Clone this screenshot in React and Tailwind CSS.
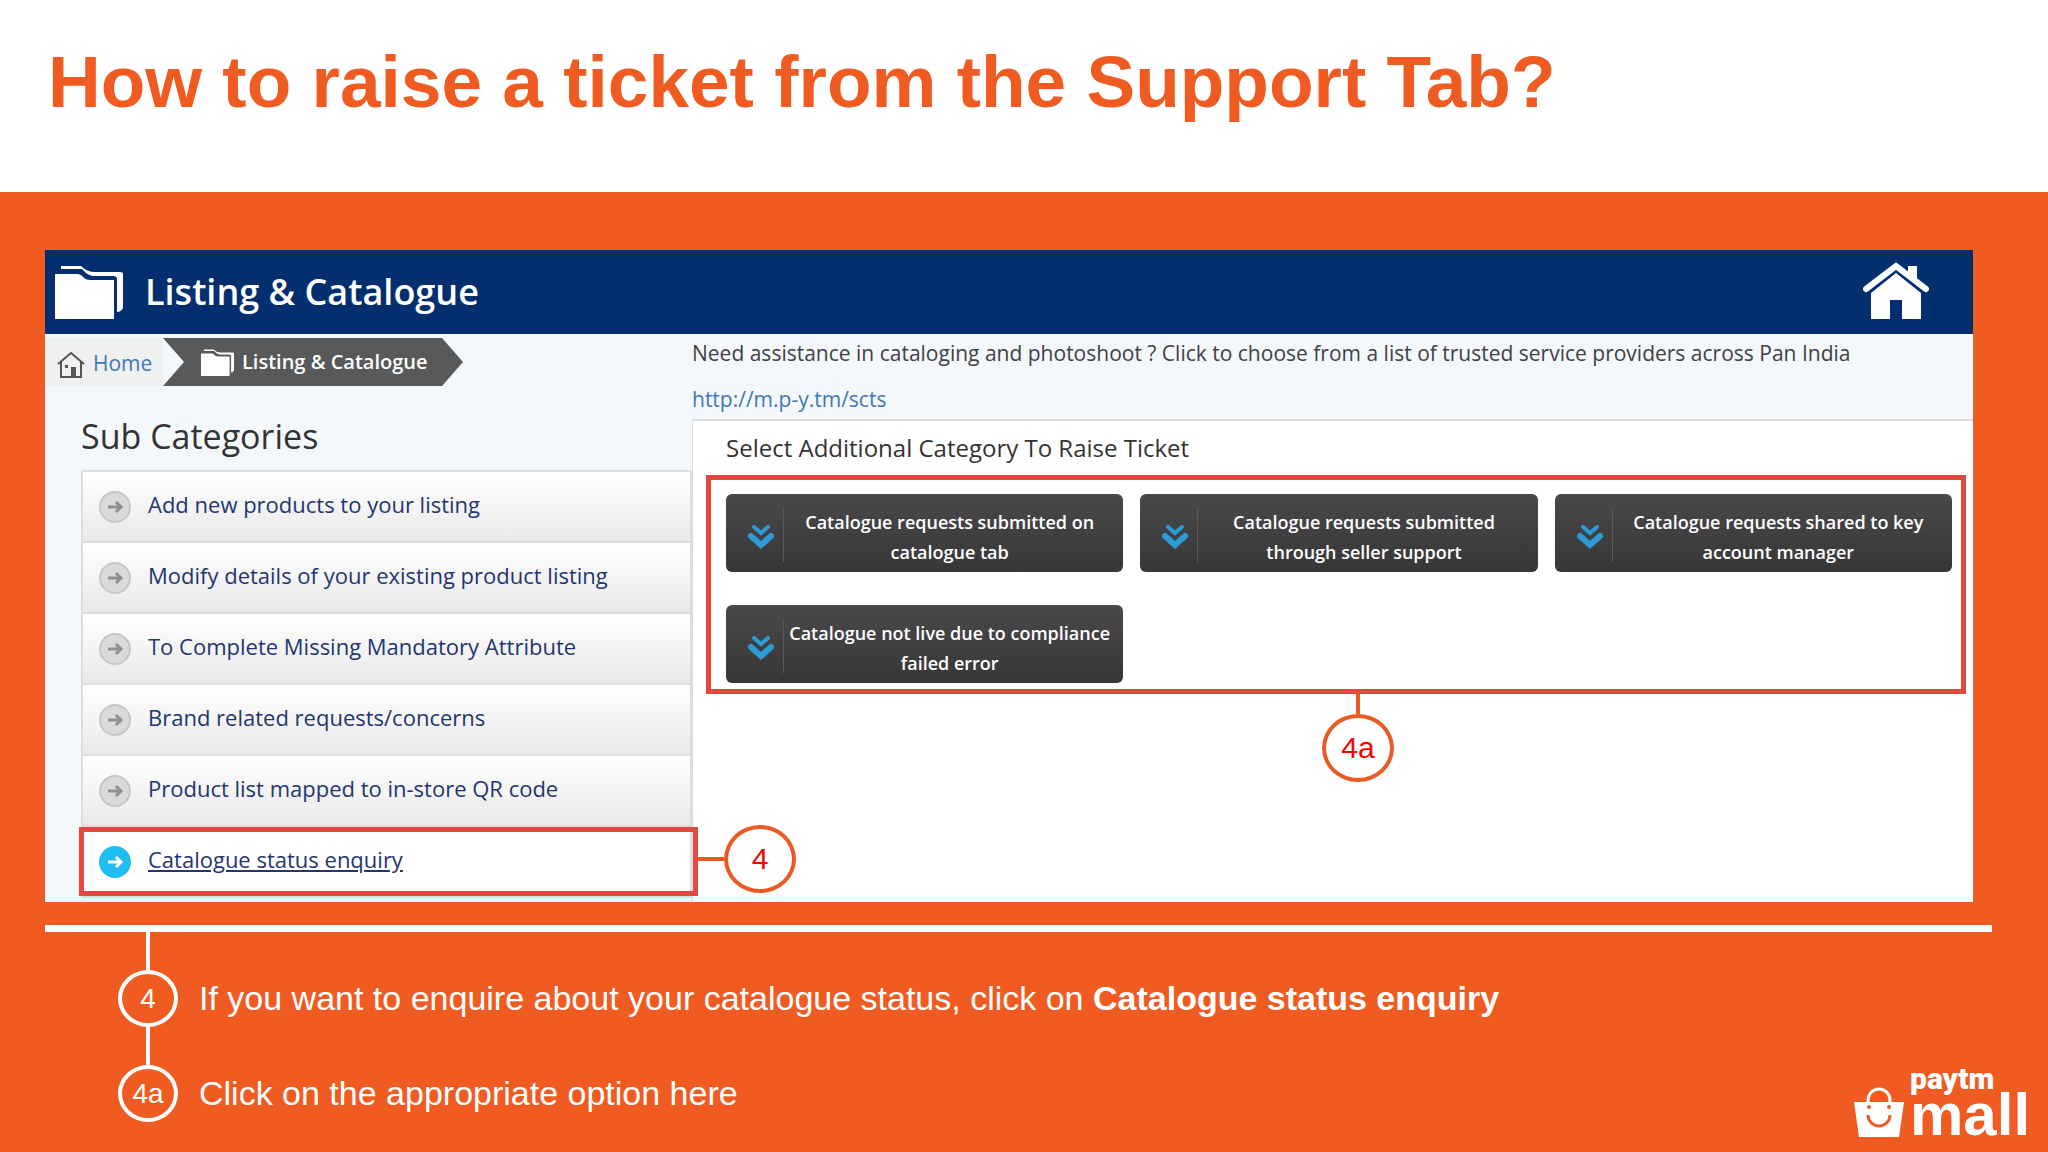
const subCategories = [
  'Add new products to your listing',
  'Modify details of your existing product listing',
  'To Complete Missing Mandatory Attribute',
  'Brand related requests/concerns',
  'Product list mapped to in-store QR code',
];

const ticketOptions = [
  'Catalogue requests submitted on catalogue tab',
  'Catalogue requests submitted through seller support',
  'Catalogue requests shared to key account manager',
  'Catalogue not live due to compliance failed error',
];

function FolderIcon({ className }) {
  return (
    <svg viewBox="0 0 68 54" preserveAspectRatio="none" className={className} aria-hidden="true">
      <path d="M6 4V1H26Q32 7 40 7H65Q68 7 68 9V43Q66 47 62 47V14Q62 11 58 11H38Q32 10 27 4Z" fill="#fff" />
      <path d="M0 9H22Q26 9 29 13Q31 15 35 15H59V54H0Z" fill="#fff" />
    </svg>
  );
}

function HouseIcon() {
  return (
    <svg viewBox="0 0 66 57" className="w-[66px] h-[57px]" aria-hidden="true">
      <path d="M3 27L33 4L63 27" fill="none" stroke="#fff" strokeWidth="6" strokeLinecap="round" />
      <path d="M45 4H54V19L45 12Z" fill="#fff" />
      <path d="M33 11L58 31V57H39V38H27V57H8V31Z" fill="#fff" />
    </svg>
  );
}

function SmallHouseIcon() {
  return (
    <svg viewBox="0 0 28 27" className="w-7 h-[27px]" fill="none" stroke="#555" strokeWidth="2" aria-hidden="true">
      <path d="M1 13L14 2L27 13" />
      <path d="M4 11V26H24V11" />
      <path d="M14 16H19V26H14Z" fill="#555" stroke="none" />
      <path d="M8 14H11V17H8Z" fill="#555" stroke="none" />
    </svg>
  );
}

function ArrowBadge({ active }) {
  return (
    <svg viewBox="0 0 32 32" className="w-8 h-8 shrink-0" aria-hidden="true">
      <circle cx="16" cy="16" r="15" fill={active ? '#1fbef0' : '#d9dadb'} stroke={active ? '#1fbef0' : '#c6c7c8'} strokeWidth="2" />
      <path d="M9 16H22M17 11L22 16L17 21" fill="none" stroke={active ? '#fff' : '#8f9091'} strokeWidth="3" />
    </svg>
  );
}

function DoubleChevron() {
  return (
    <svg viewBox="0 0 26 24" className="w-[26px] h-6" fill="none" stroke="#2c9ad6" strokeLinecap="round" aria-hidden="true">
      <path d="M6 2L13 8L20 2" strokeWidth="4" />
      <path d="M3 11L13 20L23 11" strokeWidth="6" />
    </svg>
  );
}

function MallLogo() {
  return (
    <div className="flex items-end text-white">
      <svg viewBox="0 0 50 50" className="w-[50px] h-[50px]" aria-hidden="true">
        <path d="M14 15V13A11 11 0 0 1 36 13V15" fill="none" stroke="#fff" strokeWidth="3" />
        <path d="M0 15H50L45 50H5Z" fill="#fff" />
        <circle cx="15" cy="20" r="2" fill="#f05b21" />
        <circle cx="35" cy="20" r="2" fill="#f05b21" />
        <path d="M14 28A11 11 0 0 0 36 28" fill="none" stroke="#f05b21" strokeWidth="3" />
      </svg>
      <div className="ml-1.5 w-[120px]">
        <div className="font-['Roboto',sans-serif] font-black text-[30px] leading-[28px]">paytm</div>
        <div className="font-bold text-[60px] leading-[44px]">mall</div>
      </div>
    </div>
  );
}

function StepCircle({ children }) {
  return (
    <span className="w-[60px] h-[57px] shrink-0 rounded-[50%] border-4 border-white flex items-center justify-center text-[28px] leading-none">
      {children}
    </span>
  );
}

function Callout({ children }) {
  return (
    <span className="w-[72px] h-[68px] shrink-0 rounded-[50%] border-4 border-[#ea5a22] bg-white flex items-center justify-center font-['Liberation_Sans',sans-serif] text-[30px] leading-none text-[#f80000]">
      {children}
    </span>
  );
}

export default function App() {
  return (
    <div className="min-h-screen flex flex-col bg-[#f05b21] font-['Liberation_Sans',Arial,sans-serif]">
      <header className="bg-white h-[192px] pl-12 pt-9">
        <h1 className="text-[73px] leading-[92px] font-bold text-[#f05b21]">How to raise a ticket from the Support Tab?</h1>
      </header>

      <main className="mt-[58px] ml-[45px] mr-[75px] bg-[#f5f8fb] font-['Open_Sans',sans-serif] text-[22px]">
        <div className="h-[84px] bg-[#032f6f] flex items-center pl-[10px] pr-11">
          <FolderIcon className="w-[68px] h-[54px]" />
          <h2 className="ml-[22px] text-[36px] font-semibold text-white">Listing &amp; Catalogue</h2>
          <a href="#home" aria-label="Home" className="ml-auto pb-1"><HouseIcon /></a>
        </div>

        <div className="grid grid-cols-[647px_1fr]">
          <aside className="pt-1">
            <nav aria-label="Breadcrumb" className="h-12 flex items-stretch">
              <a href="#home" className="w-[118px] pl-3 pt-1 bg-[#eff0f0] flex items-center gap-2 text-[21px] text-[#3f78b5]">
                <SmallHouseIcon />
                Home
              </a>
              <div className="w-[300px] pl-[38px] flex items-center gap-2 bg-[#58595a] text-white text-[20px] font-semibold [clip-path:polygon(0_0,279px_0,100%_50%,279px_100%,0_100%,21px_50%)]">
                <FolderIcon className="w-[33px] h-[27px]" />
                Listing &amp; Catalogue
              </div>
            </nav>

            <div className="pl-[36px] pt-6">
              <h3 className="text-[34px] leading-[52px] font-medium text-[#333]">Sub Categories</h3>
              <ul className="mt-2 text-[#23366f] font-medium">
                {subCategories.map(function (label) {
                  return (
                    <li key={label} className="border-2 border-b-0 border-[#dcdddf]">
                      <a href="#category" className="h-[69px] px-4 flex items-center gap-[17px] bg-linear-to-b from-white to-[#e9e9eb]">
                        <ArrowBadge />
                        <span className="pb-1">{label}</span>
                      </a>
                    </li>
                  );
                })}
                <li className="relative border-2 border-[#dcdddf] mb-1">
                  <a href="#category" className="h-[69px] px-4 flex items-center gap-[17px] bg-white underline">
                    <ArrowBadge active />
                    <span className="pb-1">Catalogue status enquiry</span>
                  </a>
                  <div className="absolute -left-1 top-0 w-[619px] h-[69px] border-[5px] border-[#e5493d]" />
                  <div className="absolute left-[615px] top-0 h-[64px] flex items-center">
                    <span className="w-[26px] h-1 bg-[#ea5a22]" />
                    <Callout>4</Callout>
                  </div>
                </li>
              </ul>
            </div>
          </aside>

          <section className="flex flex-col text-[#3f4145] text-[21px]">
            <p className="h-[38px] leading-[38px]">Need assistance in cataloging and photoshoot ? Click to choose from a list of trusted service providers across Pan India</p>
            <p className="h-[47px] pt-2 leading-[38px]"><a href="http://m.p-y.tm/scts" className="text-[#3f78b5]">http://m.p-y.tm/scts</a></p>
            <div className="grow border-t-2 border-l border-[#dcdddf] bg-white pl-[13px] pr-[7px]">
              <h3 className="pl-5 pt-1 pb-1 leading-[46px] text-[24px] font-medium text-[#333]">Select Additional Category To Raise Ticket</h3>
              <div className="border-[5px] border-[#e5493d] pl-[15px] pr-[9px] pt-[14px] pb-[6px] grid grid-cols-3 gap-x-[17px] gap-y-[33px]">
                {ticketOptions.map(function (label) {
                  return (
                    <button key={label} type="button" className="h-[78px] rounded-md bg-linear-to-b from-[#4a484a] to-[#383738] text-white font-semibold flex items-center">
                      <span className="w-[58px] h-[54px] pl-[22px] pt-1 mt-1 shrink-0 border-r border-[#5a5859] flex items-center"><DoubleChevron /></span>
                      <span className="grow pt-2 pr-2 text-center text-[18px] leading-[30px]">{label}</span>
                    </button>
                  );
                })}
              </div>
              <div className="w-fit ml-[616px] flex flex-col items-center">
                <span className="w-1 h-5 bg-[#ea5a22]" />
                <Callout>4a</Callout>
              </div>
            </div>
          </section>
        </div>
      </main>

      <div className="mt-[23px] ml-[45px] mr-14 h-[7px] bg-white" />

      <footer className="grow flex justify-between pl-[118px] pr-[18px] text-white text-[34px]">
        <ol>
          <li className="flex items-end gap-[21px]">
            <div className="flex flex-col items-center">
              <span className="w-1 h-[38px] bg-white" />
              <StepCircle>4</StepCircle>
            </div>
            <p className="leading-[57px]">If you want to enquire about your catalogue status, click on <b>Catalogue status enquiry</b></p>
          </li>
          <li className="flex items-end gap-[21px]">
            <div className="flex flex-col items-center">
              <span className="w-1 h-[38px] bg-white" />
              <StepCircle>4a</StepCircle>
            </div>
            <p className="leading-[57px]">Click on the appropriate option here</p>
          </li>
        </ol>
        <div className="self-end pb-[15px]">
          <MallLogo />
        </div>
      </footer>
    </div>
  );
}
